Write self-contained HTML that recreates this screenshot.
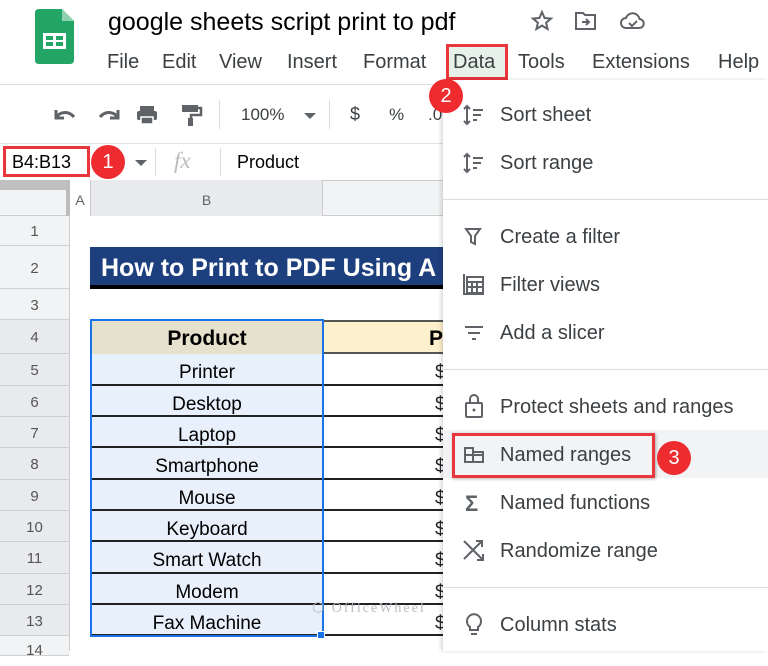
<!DOCTYPE html>
<html><head><meta charset="utf-8"><style>
*{margin:0;padding:0;box-sizing:border-box}
body{width:768px;height:651px;overflow:hidden;background:#fff;font-family:"Liberation Sans",Arial,sans-serif;position:relative;color:#202124}
.a{position:absolute;white-space:nowrap}
.menu{font-size:20px;color:#3c4043;top:51px}
.circ{position:absolute;width:34px;height:34px;border-radius:50%;background:#ee2b2f;color:#fff;font-size:20px;text-align:center;line-height:34px}
.rn{position:absolute;left:0;width:69px;text-align:center;font-size:15px;color:#555;background:#f1f3f4;border-bottom:1px solid #d0d0d0}
.cb{position:absolute;left:91px;width:232px;text-align:center;font-size:19px;color:#000;background:#e8f0fb;border-bottom:2px solid #222;padding-top:3px}
.cc{position:absolute;left:323px;width:120px;font-size:19px;border-bottom:2px solid #222;padding-left:112px;padding-top:3px}
.mi{position:absolute;left:500px;font-size:20px;color:#3c4043}
.ic{position:absolute;left:462px}
</style></head><body>
<svg class="a" style="left:35px;top:9px" width="39" height="55" viewBox="0 0 39 55"><path d="M4 0H27L39 12V51Q39 55 35 55H4Q0 55 0 51V4Q0 0 4 0Z" fill="#23a566"/><path d="M27 0V12H39Z" fill="#8ed1b1"/><rect x="8" y="24" width="23" height="16" fill="#fff"/><rect x="11" y="27" width="7" height="4" fill="#23a566"/><rect x="21" y="27" width="7" height="4" fill="#23a566"/><rect x="11" y="33" width="7" height="4" fill="#23a566"/><rect x="21" y="33" width="7" height="4" fill="#23a566"/></svg>
<div class="a" style="left:108px;top:8px;font-size:25px;color:#000">google sheets script print to pdf</div>
<svg class="a" style="left:530px;top:9px" width="24" height="24" viewBox="0 0 24 24"><path d="M12 3l2.6 6 6.4.5-4.9 4.2 1.5 6.3L12 16.6 6.4 20l1.5-6.3L3 9.5l6.4-.5z" fill="none" stroke="#5f6368" stroke-width="2"/></svg>
<svg class="a" style="left:574px;top:10px" width="24" height="22" viewBox="0 0 24 22"><path d="M2 3h7l2 2h10v14H2z" fill="none" stroke="#5f6368" stroke-width="2"/><path d="M8 12h7M12 9l3 3-3 3" fill="none" stroke="#5f6368" stroke-width="2"/></svg>
<svg class="a" style="left:620px;top:10px" width="26" height="22" viewBox="0 0 26 22"><path d="M7 18H6a5 5 0 010-10 7 7 0 0113.5 1A4.5 4.5 0 0119 18z" fill="none" stroke="#5f6368" stroke-width="2"/><path d="M9 13l3 3 5-5" fill="none" stroke="#5f6368" stroke-width="2"/></svg>
<div class="a menu" style="left:107px">File</div>
<div class="a menu" style="left:162px">Edit</div>
<div class="a menu" style="left:219px">View</div>
<div class="a menu" style="left:287px">Insert</div>
<div class="a menu" style="left:363px">Format</div>
<div class="a" style="left:446px;top:44px;width:62px;height:36px;border:3px solid #e8363c;background:#e6f1ea"></div>
<div class="a menu" style="left:453px">Data</div>
<div class="a menu" style="left:518px">Tools</div>
<div class="a menu" style="left:592px">Extensions</div>
<div class="a menu" style="left:718px">Help</div>
<div class="a" style="left:0;top:84px;width:768px;height:1px;background:#dadce0"></div>
<svg class="a" style="left:52px;top:104px" width="130" height="22" viewBox="0 0 130 22">
<path d="M4 6v8h8M4 14c3-6 12-8 18-1" fill="none" stroke="#5f6368" stroke-width="3"/>
<path d="M66 6v8h-8M66 14c-3-6-12-8-18-1" fill="none" stroke="#5f6368" stroke-width="3"/>
<rect x="88" y="2" width="14" height="5" fill="#5f6368"/><rect x="85" y="7" width="20" height="9" rx="2" fill="#5f6368"/><rect x="89" y="13" width="12" height="7" fill="#5f6368" stroke="#fff" stroke-width="1.5"/>
</svg>
<svg class="a" style="left:180px;top:103px" width="24" height="24" viewBox="0 0 24 24"><rect x="2" y="2" width="16" height="7" fill="#5f6368"/><path d="M18 5h3v7h-10v4" fill="none" stroke="#5f6368" stroke-width="2.5"/><rect x="8" y="15" width="5" height="8" fill="#5f6368"/></svg>
<div class="a" style="left:219px;top:100px;width:1px;height:29px;background:#dadce0"></div>
<div class="a" style="left:241px;top:105px;font-size:17px;color:#3c4043">100%</div>
<div class="a" style="left:304px;top:113px;border:6px solid transparent;border-top:6px solid #5f6368"></div>
<div class="a" style="left:329px;top:100px;width:1px;height:29px;background:#dadce0"></div>
<div class="a" style="left:350px;top:104px;font-size:18px;color:#3c4043">$</div>
<div class="a" style="left:389px;top:105px;font-size:17px;color:#3c4043">%</div>
<div class="a" style="left:428px;top:105px;font-size:17px;color:#3c4043">.0</div>
<div class="a" style="left:0;top:143px;width:443px;height:1px;background:#e0e0e0"></div>
<div class="a" style="left:3px;top:146px;width:87px;height:31px;border:3px solid #e8363c"></div>
<div class="a" style="left:12px;top:152px;font-size:18px;color:#000">B4:B13</div>
<div class="circ" style="left:91px;top:145px">1</div>
<div class="a" style="left:135px;top:160px;border:6px solid transparent;border-top:6px solid #5f6368"></div>
<div class="a" style="left:155px;top:148px;width:1px;height:28px;background:#dadce0"></div>
<div class="a" style="left:174px;top:148px;font-size:23px;font-style:italic;font-family:'Liberation Serif',serif;color:#bbb">fx</div>
<div class="a" style="left:220px;top:148px;width:1px;height:28px;background:#dadce0"></div>
<div class="a" style="left:237px;top:152px;font-size:18px;color:#000">Product</div>
<div class="a" style="left:0;top:180px;width:443px;height:36px;background:#f1f3f4;border-top:1px solid #ccc;border-bottom:1px solid #ccc"></div>
<div class="a" style="left:0;top:180px;width:66px;height:10px;background:#c0c0c0"></div>
<div class="a" style="left:66px;top:180px;width:4px;height:36px;background:#bdbdbd"></div>
<div class="a" style="left:70px;top:180px;width:21px;height:36px;background:#fff;border-right:1px solid #ccc;font-size:14px;color:#5f6368;text-align:center;line-height:40px">A</div>
<div class="a" style="left:91px;top:180px;width:232px;height:36px;background:#e8eaed;border-right:1px solid #ccc;font-size:14px;color:#5f6368;text-align:center;line-height:40px">B</div>
<div class="a" style="left:69px;top:216px;width:1px;height:435px;background:#ccc"></div>
<div class="rn" style="top:216px;height:30px;line-height:32px">1</div>
<div class="rn" style="top:246px;height:43px;line-height:45px">2</div>
<div class="rn" style="top:289px;height:31px;line-height:33px">3</div>
<div class="rn" style="top:320px;height:34px;line-height:36px;background:#e8eaed">4</div>
<div class="rn" style="top:354px;height:32px;line-height:34px;background:#e8eaed">5</div>
<div class="rn" style="top:386px;height:31px;line-height:33px;background:#e8eaed">6</div>
<div class="rn" style="top:417px;height:31px;line-height:33px;background:#e8eaed">7</div>
<div class="rn" style="top:448px;height:32px;line-height:34px;background:#e8eaed">8</div>
<div class="rn" style="top:480px;height:31px;line-height:33px;background:#e8eaed">9</div>
<div class="rn" style="top:511px;height:31px;line-height:33px;background:#e8eaed">10</div>
<div class="rn" style="top:542px;height:32px;line-height:34px;background:#e8eaed">11</div>
<div class="rn" style="top:574px;height:31px;line-height:33px;background:#e8eaed">12</div>
<div class="rn" style="top:605px;height:31px;line-height:33px;background:#e8eaed">13</div>
<div class="rn" style="top:636px;height:20px;line-height:30px">14</div>
<div class="a" style="left:90px;top:247px;width:353px;height:42px;background:#1e3f7d;border-bottom:4px solid #000;color:#fff;font-weight:bold;font-size:25px;padding-left:11px;line-height:42px;overflow:hidden">How to Print to PDF Using A</div>
<div class="a" style="left:91px;top:320px;width:232px;height:34px;background:#e6e1cc;font-weight:bold;font-size:21px;text-align:center;line-height:38px;color:#000">Product</div>
<div class="a" style="left:323px;top:320px;width:120px;height:34px;background:#fdf0cc;border-top:2px solid #555;border-bottom:2px solid #555;font-weight:bold;font-size:21px;line-height:34px;color:#000;padding-left:106px;overflow:hidden">P</div>
<div class="cb" style="top:354px;height:32px;line-height:32px">Printer</div>
<div class="cb" style="top:386px;height:31px;line-height:31px">Desktop</div>
<div class="cb" style="top:417px;height:31px;line-height:31px">Laptop</div>
<div class="cb" style="top:448px;height:32px;line-height:32px">Smartphone</div>
<div class="cb" style="top:480px;height:31px;line-height:31px">Mouse</div>
<div class="cb" style="top:511px;height:31px;line-height:31px">Keyboard</div>
<div class="cb" style="top:542px;height:32px;line-height:32px">Smart Watch</div>
<div class="cb" style="top:574px;height:31px;line-height:31px">Modem</div>
<div class="cb" style="top:605px;height:31px;line-height:31px">Fax Machine</div>
<div class="cc" style="top:354px;height:32px;line-height:32px">$</div>
<div class="cc" style="top:386px;height:31px;line-height:31px">$</div>
<div class="cc" style="top:417px;height:31px;line-height:31px">$</div>
<div class="cc" style="top:448px;height:32px;line-height:32px">$</div>
<div class="cc" style="top:480px;height:31px;line-height:31px">$</div>
<div class="cc" style="top:511px;height:31px;line-height:31px">$</div>
<div class="cc" style="top:542px;height:32px;line-height:32px">$</div>
<div class="cc" style="top:574px;height:31px;line-height:31px">$</div>
<div class="cc" style="top:605px;height:31px;line-height:31px">$</div>
<div class="a" style="left:90px;top:319px;width:234px;height:318px;border:2px solid #1a73e8"></div>
<div class="a" style="left:317px;top:631px;width:8px;height:8px;background:#1a73e8;border:1px solid #fff"></div>
<div class="a" style="left:312px;top:600px;font-size:14px;color:#b8bcc4;font-family:'Liberation Serif',serif;letter-spacing:2px">⬡ OfficeWheel</div>
<div class="a" style="left:443px;top:80px;width:325px;height:571px;background:#fff;box-shadow:-2px 0 4px rgba(0,0,0,.15)"></div>
<div class="a" style="left:443px;top:430px;width:325px;height:48px;background:#f1f3f4"></div>
<div class="a" style="left:443px;top:199px;width:325px;height:1px;background:#dadce0"></div>
<div class="a" style="left:443px;top:369px;width:325px;height:1px;background:#dadce0"></div>
<div class="a" style="left:443px;top:587px;width:325px;height:1px;background:#dadce0"></div>
<svg class="ic" style="top:104px" width="24" height="22" viewBox="0 0 24 22"><path d="M5 2v18M2 5l3-3 3 3M2 17l3 3 3-3M11 6h10M11 11h8M11 16h4" fill="none" stroke="#5f6368" stroke-width="2"/></svg>
<div class="mi" style="top:104px">Sort sheet</div>
<svg class="ic" style="top:152px" width="24" height="22" viewBox="0 0 24 22"><path d="M5 2v18M2 5l3-3 3 3M2 17l3 3 3-3M11 6h10M11 11h8M11 16h4" fill="none" stroke="#5f6368" stroke-width="2"/></svg>
<div class="mi" style="top:152px">Sort range</div>
<svg class="ic" style="top:226px" width="24" height="22" viewBox="0 0 24 22"><path d="M4 3h14l-5 7v8l-4-2v-6z" fill="none" stroke="#5f6368" stroke-width="2"/></svg>
<div class="mi" style="top:226px">Create a filter</div>
<svg class="ic" style="top:272px" width="24" height="24" viewBox="0 0 24 24"><path d="M2 2v20h20M5 5h16v16H5zM5 10h16M5 15h16M10 10v11M15 10v11" fill="none" stroke="#5f6368" stroke-width="2"/></svg>
<div class="mi" style="top:274px">Filter views</div>
<svg class="ic" style="top:322px" width="24" height="22" viewBox="0 0 24 22"><path d="M3 5h18M6 11h12M10 17h4" fill="none" stroke="#5f6368" stroke-width="2"/></svg>
<div class="mi" style="top:322px">Add a slicer</div>
<svg class="ic" style="top:393px" width="24" height="26" viewBox="0 0 24 26"><rect x="4" y="10" width="16" height="14" rx="1" fill="none" stroke="#5f6368" stroke-width="2"/><path d="M8 10V6a4 4 0 018 0v4" fill="none" stroke="#5f6368" stroke-width="2"/><circle cx="12" cy="17" r="1.5" fill="#5f6368"/></svg>
<div class="mi" style="top:396px">Protect sheets and ranges</div>
<div class="a" style="left:452px;top:433px;width:203px;height:45px;border:3px solid #e8363c;box-shadow:1px 1px 3px rgba(0,0,0,.3)"></div>
<svg class="ic" style="top:444px" width="24" height="22" viewBox="0 0 24 22"><path d="M3 4h8v14H3zM11 8h10v10H11zM3 11h18" fill="none" stroke="#5f6368" stroke-width="2"/></svg>
<div class="mi" style="top:444px">Named ranges</div>
<div class="circ" style="left:657px;top:441px">3</div>
<div class="a" style="left:465px;top:491px;font-size:22px;color:#5f6368;font-weight:bold">Σ</div>
<div class="mi" style="top:492px">Named functions</div>
<svg class="ic" style="top:538px" width="24" height="24" viewBox="0 0 24 24"><path d="M2 3l19 19M2 21L20 3M14 3h6v6M15 22h6v-6" fill="none" stroke="#5f6368" stroke-width="2"/></svg>
<div class="mi" style="top:540px">Randomize range</div>
<svg class="ic" style="top:612px" width="24" height="26" viewBox="0 0 24 26"><path d="M8 18v-3a7 7 0 118 0v3zM9 22h6" fill="none" stroke="#5f6368" stroke-width="2"/></svg>
<div class="mi" style="top:614px">Column stats</div>
<div class="circ" style="left:429px;top:79px">2</div>
</body></html>
